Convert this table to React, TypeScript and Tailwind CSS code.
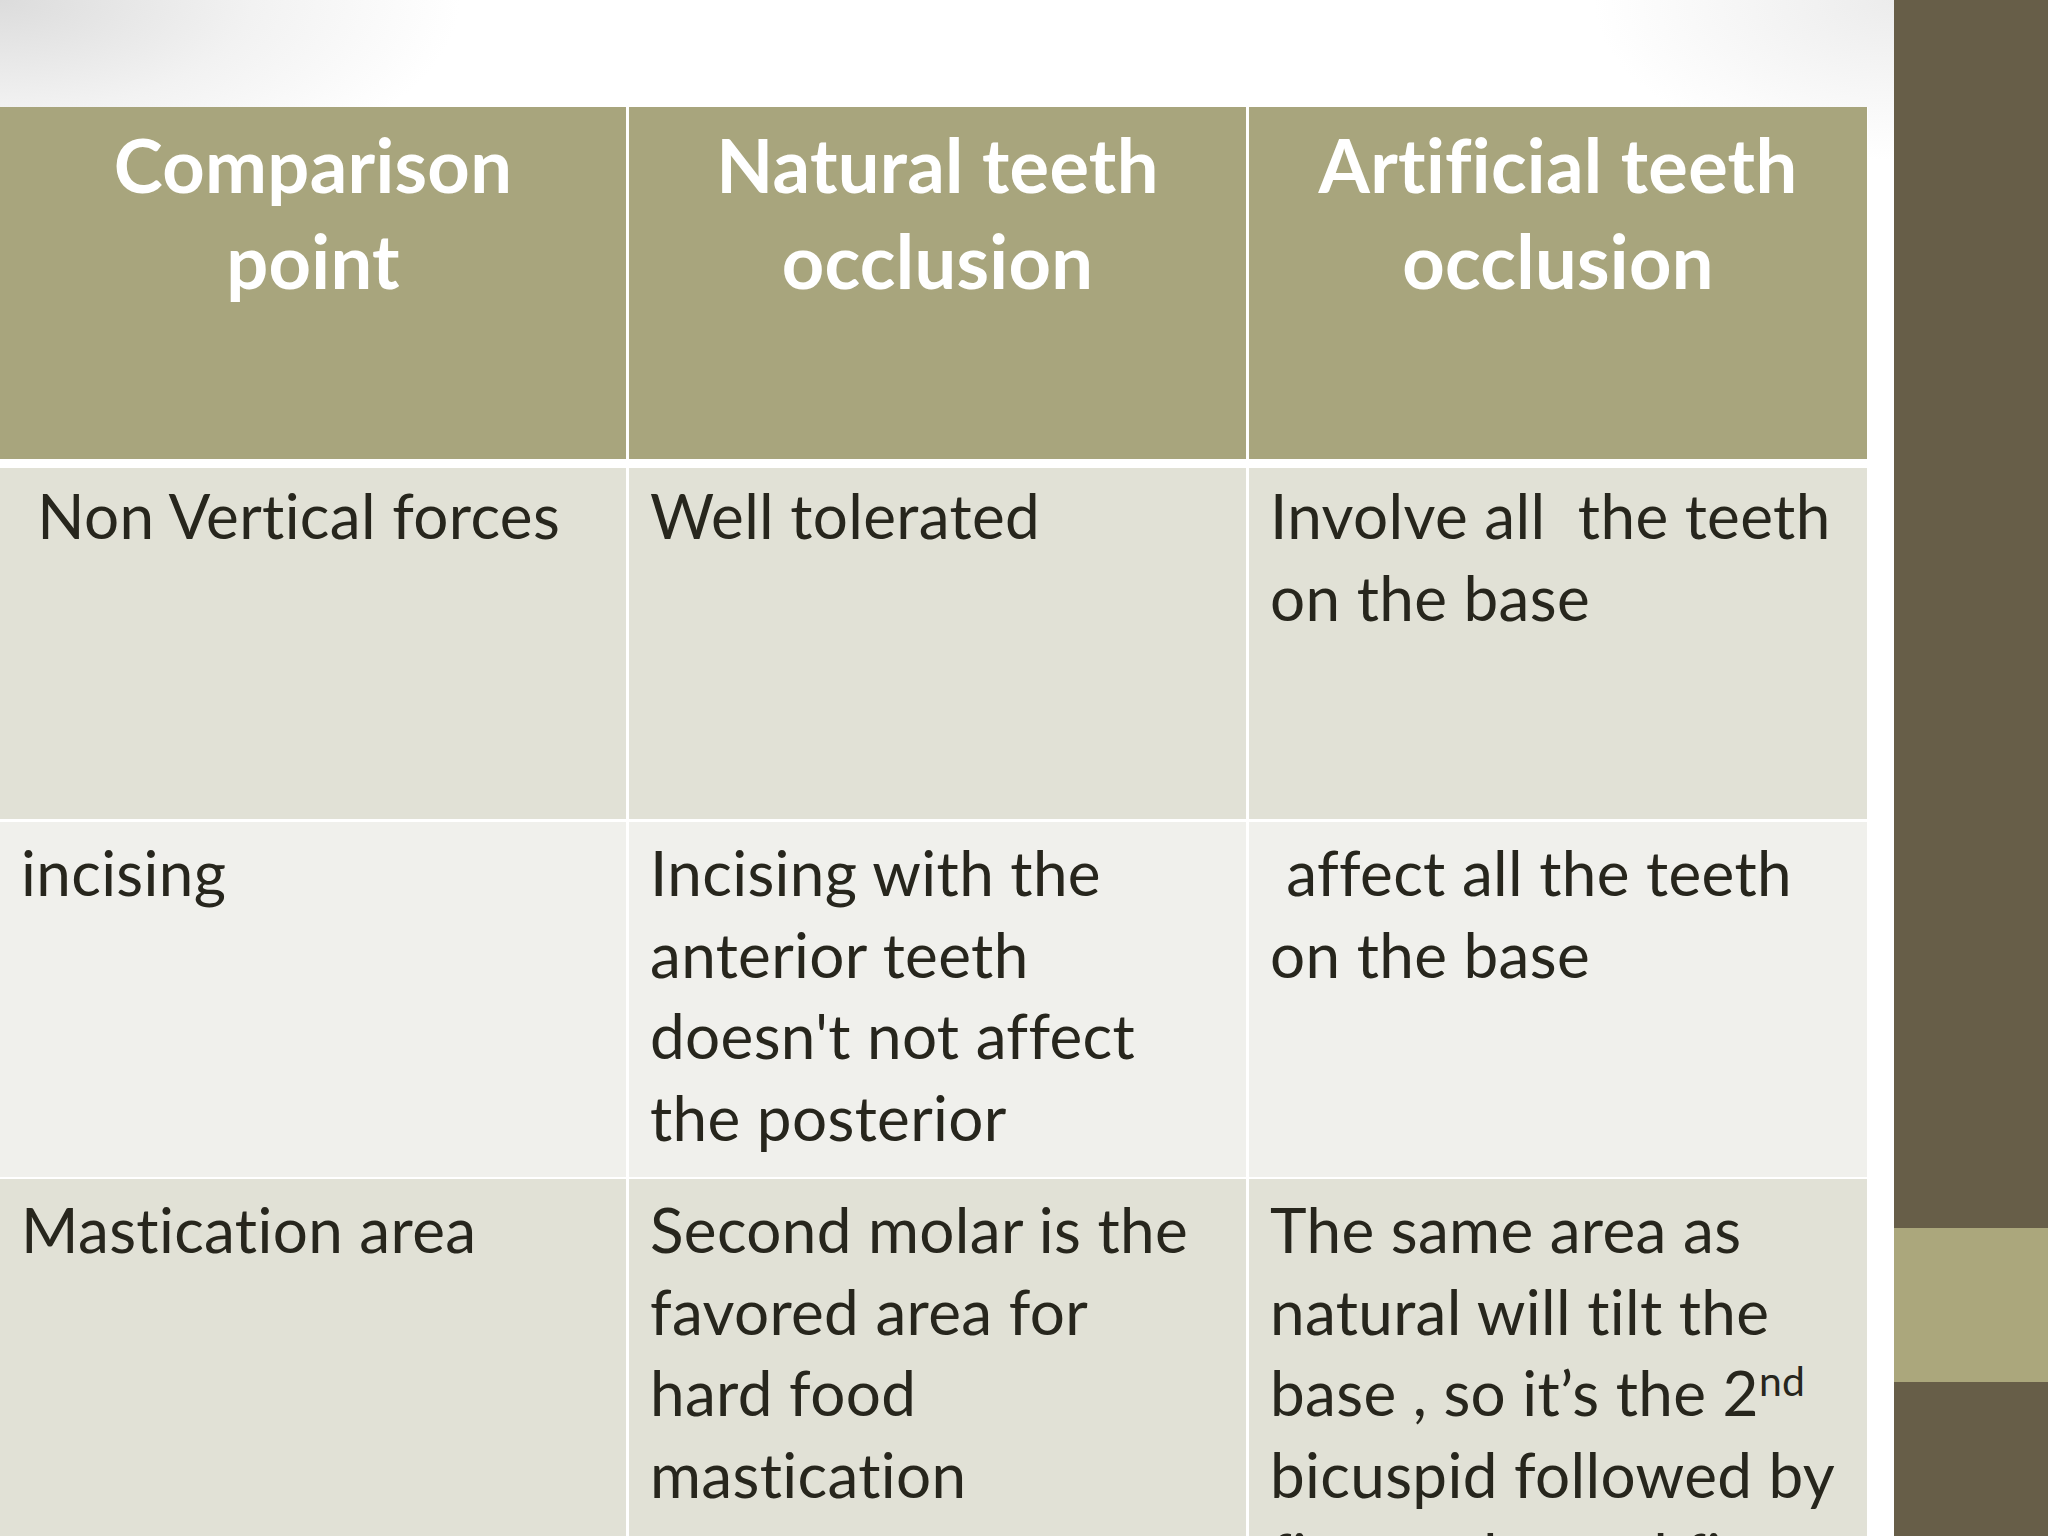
import React from "react";

type Cell = React.ReactNode[];

const Lines = ({ lines }: { lines: Cell }) => (
  <div className="flex flex-col">
    {lines.map((l, i) => (
      <div key={i} className="whitespace-pre">
        {l}
      </div>
    ))}
  </div>
);

const BodyCell = ({ w, lines, bg, pt }: { w: string; lines: Cell; bg: string; pt: string }) => (
  <div
    className={`${w} ${bg} ${pt} shrink-0 pl-[21px] text-[62px] leading-[81.6px] tracking-[0.35px] text-[#27261d]`}
  >
    <Lines lines={lines} />
  </div>
);

const HeadCell = ({ w, lines }: { w: string; lines: string[] }) => (
  <div
    className={`${w} shrink-0 bg-[#a8a57d] pt-[10px] text-center text-[74px] font-bold leading-[96px] tracking-[0.3px] text-white`}
  >
    {lines.map((l, i) => (
      <div key={i}>{l}</div>
    ))}
  </div>
);

export default function App() {
  const W1 = "w-[626px]";
  const W2 = "w-[617px]";
  const W3 = "w-[618px]";
  return (
    <div
      className="relative flex h-[1536px] w-[2048px] overflow-hidden bg-white"
      style={{ fontFamily: "Lato, 'Open Sans', sans-serif" }}
    >
      <div className="flex-1 bg-[radial-gradient(ellipse_460px_200px_at_0%_0%,#dcdcdc_0%,#f2f2f2_55%,rgba(255,255,255,0)_100%),radial-gradient(ellipse_300px_160px_at_100%_0%,#ececec_0%,rgba(255,255,255,0)_100%)] pt-[107px]">
        <div className="flex w-[1868px] flex-col bg-white">
          <div className="flex h-[352px] gap-[3px]">
            <HeadCell w={W1} lines={["Comparison", "point"]} />
            <HeadCell w={W2} lines={["Natural teeth", "occlusion"]} />
            <HeadCell w={W3} lines={["Artificial teeth", "occlusion"]} />
          </div>
          <div className="mt-[9px] flex h-[351px] gap-[3px]">
            <BodyCell pt="pt-[7px]" w={W1} bg="bg-[#e1e1d6]" lines={[" Non Vertical forces"]} />
            <BodyCell pt="pt-[7px]" w={W2} bg="bg-[#e1e1d6]" lines={["Well tolerated"]} />
            <BodyCell pt="pt-[7px]" w={W3} bg="bg-[#e1e1d6]" lines={["Involve all  the teeth", "on the base"]} />
          </div>
          <div className="mt-[3px] flex h-[355px] gap-[3px]">
            <BodyCell pt="pt-[10px]" w={W1} bg="bg-[#f0f0ec]" lines={["incising"]} />
            <BodyCell
              pt="pt-[10px]"
              w={W2}
              bg="bg-[#f0f0ec]"
              lines={["Incising with the", "anterior teeth", "doesn't not affect", "the posterior"]}
            />
            <BodyCell pt="pt-[10px]" w={W3} bg="bg-[#f0f0ec]" lines={[" affect all the teeth", "on the base"]} />
          </div>
          <div className="mt-[2px] flex h-[420px] gap-[3px]">
            <BodyCell pt="pt-[10px]" w={W1} bg="bg-[#e1e1d6]" lines={["Mastication area"]} />
            <BodyCell
              pt="pt-[10px]"
              w={W2}
              bg="bg-[#e1e1d6]"
              lines={["Second molar is the", "favored area for", "hard food", "mastication"]}
            />
            <BodyCell
              pt="pt-[10px]"
              w={W3}
              bg="bg-[#e1e1d6]"
              lines={[
                "The same area as",
                "natural will tilt the",
                <>
                  base , so it’s the 2
                  <sup className="relative -top-[0.5em] align-baseline text-[0.66em] leading-none">nd</sup>
                </>,
                "bicuspid followed by",
                "first molar and first",
              ]}
            />
          </div>
        </div>
      </div>
      <div className="flex w-[154px] shrink-0 flex-col">
        <div className="h-[1228px] bg-[#675e48]" />
        <div className="h-[154px] bg-[#aba77c]" />
        <div className="flex-1 bg-[#675e48]" />
      </div>
    </div>
  );
}
